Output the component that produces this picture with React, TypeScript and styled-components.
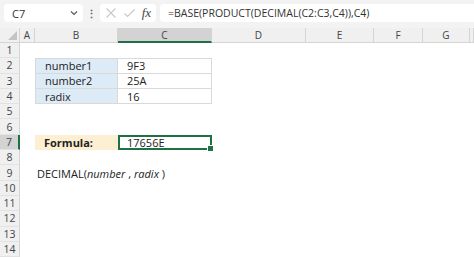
import React from "react";
import styled, { createGlobalStyle, css } from "styled-components";

const GlobalStyle = createGlobalStyle`
  html, body {
    margin: 0;
    padding: 0;
    background: #ffffff;
    overflow: hidden;
  }
  body {
    font-family: "Open Sans", "Liberation Sans", Arial, sans-serif;
    color: #222;
  }
`;

const COLS = ["A", "B", "C", "D", "E", "F", "G", ""];
const COL_WIDTHS = "20px 15px 83px 94px 94px 68px 49px 47px 1fr";
const ROW_H = 15.3;

const Page = styled.div`
  width: 474px;
  height: 257px;
  overflow: hidden;
  background: #fff;
`;

const FormulaBar = styled.div`
  display: flex;
  align-items: center;
  height: 28px;
  padding: 0 0 2px 4px;
  box-sizing: border-box;
  background: #f3f3f3;
`;

const NameBox = styled.div`
  display: flex;
  align-items: center;
  justify-content: space-between;
  width: 79px;
  height: 18px;
  box-sizing: border-box;
  padding: 0 4px 0 8px;
  background: #fff;
  border-radius: 4px;
  font-size: 11px;
  color: #333;
`;

const Dots = styled.div`
  width: 17px;
  text-align: center;
  color: #666;
  font-size: 11px;
  font-weight: bold;
`;

const ButtonBox = styled.div`
  display: flex;
  align-items: center;
  justify-content: space-around;
  width: 56px;
  height: 18px;
  background: #fff;
  border-radius: 4px;
  padding: 0 2px;
  box-sizing: border-box;
`;

const Fx = styled.span`
  font-family: "Liberation Serif", "Times New Roman", serif;
  font-style: italic;
  font-size: 13px;
  color: #444;
`;

const FormulaInput = styled.div`
  flex: 1;
  height: 18px;
  margin-left: 4px;
  background: #fff;
  border-radius: 4px 0 0 4px;
  display: flex;
  align-items: center;
  padding-left: 8px;
  font-size: 10.5px;
  color: #333;
  white-space: nowrap;
`;

const Sheet = styled.div`
  display: grid;
  grid-template-columns: ${COL_WIDTHS};
  grid-template-rows: 15px repeat(14, ${ROW_H}px);
`;

const Corner = styled.div`
  background: #f0f0f0;
  border-right: 1px solid #d4d4d4;
  border-bottom: 1px solid #d4d4d4;
  position: relative;
  &::after {
    content: "";
    position: absolute;
    right: 2px;
    bottom: 2px;
    width: 0;
    height: 0;
    border-left: 9px solid transparent;
    border-bottom: 9px solid #c4c4c4;
  }
`;

const ColHead = styled.div<{ $active?: boolean }>`
  display: flex;
  align-items: center;
  justify-content: center;
  font-size: 10px;
  color: #444;
  background: ${(p) => (p.$active ? "#d3d3d3" : "#f0f0f0")};
  border-right: 1px solid #d4d4d4;
  border-bottom: ${(p) => (p.$active ? "2px solid #1e7145" : "1px solid #d4d4d4")};
  box-sizing: border-box;
`;

const RowHead = styled.div<{ $active?: boolean }>`
  display: flex;
  align-items: center;
  justify-content: center;
  font-size: 10.5px;
  color: #444;
  background: ${(p) => (p.$active ? "#d3d3d3" : "#f0f0f0")};
  border-right: ${(p) => (p.$active ? "2px solid #1e7145" : "1px solid #d4d4d4")};
  border-bottom: 1px solid #e2e2e2;
  box-sizing: border-box;
`;

type CellKind = "plain" | "label" | "value" | "formulaLabel" | "selected";

const Cell = styled.div<{ $kind?: CellKind; $span?: number; $top?: boolean; $indent?: number }>`
  display: flex;
  align-items: center;
  padding-left: ${(p) => p.$indent ?? 9}px;
  font-size: 11px;
  color: #222;
  white-space: nowrap;
  box-sizing: border-box;
  position: relative;
  ${(p) => (p.$span ? `grid-column: span ${p.$span};` : "")}
  ${(p) => p.$top && "border-top: 1px solid #d9d9d9;"}
  ${(p) =>
    p.$kind === "label" &&
    css`
      background: #ddebf7;
      border-left: 1px solid #d9d9d9;
      border-right: 1px solid #d9d9d9;
      border-bottom: 1px solid #d9d9d9;
    `}
  ${(p) =>
    p.$kind === "value" &&
    css`
      background: #fff;
      border-right: 1px solid #d9d9d9;
      border-bottom: 1px solid #d9d9d9;
    `}
  ${(p) =>
    p.$kind === "formulaLabel" &&
    css`
      background: #fdefd2;
      font-weight: bold;
    `}
  ${(p) =>
    p.$kind === "selected" &&
    css`
      border: 2px solid #1e7145;
      padding-left: 7px;
      &::after {
        content: "";
        position: absolute;
        right: -4px;
        bottom: -4px;
        width: 5px;
        height: 5px;
        background: #1e7145;
        border: 1px solid #fff;
      }
    `}
`;

const Italic = styled.i`
  font-style: italic;
`;

const TABLE = [
  ["number1", "9F3"],
  ["number2", "25A"],
  ["radix", "16"],
];

const renderRow = (n: number) => {
  const items: React.ReactNode[] = [
    <RowHead key={`h${n}`} $active={n === 7}>
      {n}
    </RowHead>,
  ];
  if (n >= 2 && n <= 4) {
    const [label, value] = TABLE[n - 2];
    items.push(<Cell key={`a${n}`} />);
    items.push(
      <Cell key={`b${n}`} $kind="label" $top={n === 2}>
        {label}
      </Cell>
    );
    items.push(
      <Cell key={`c${n}`} $kind="value" $top={n === 2}>
        {value}
      </Cell>
    );
    items.push(<Cell key={`r${n}`} $span={5} />);
  } else if (n === 7) {
    items.push(<Cell key="a7" />);
    items.push(
      <Cell key="b7" $kind="formulaLabel">
        Formula:
      </Cell>
    );
    items.push(
      <Cell key="c7" $kind="selected">
        17656E
      </Cell>
    );
    items.push(<Cell key="r7" $span={5} />);
  } else if (n === 9) {
    items.push(<Cell key="a9" />);
    items.push(
      <Cell key="b9" $span={7} $indent={2}>
        DECIMAL(<Italic>number</Italic>&nbsp;,&nbsp;<Italic>radix</Italic>&nbsp;)
      </Cell>
    );
  } else {
    items.push(<Cell key={`r${n}`} $span={8} />);
  }
  return items;
};

const App: React.FC = () => {
  return (
    <Page>
      <GlobalStyle />
      <FormulaBar>
        <NameBox>
          <span>C7</span>
          <svg width="10" height="10" viewBox="0 0 10 10">
            <path d="M2 3.5 L5 6.5 L8 3.5" fill="none" stroke="#555" strokeWidth="1.1" />
          </svg>
        </NameBox>
        <Dots>⋮</Dots>
        <ButtonBox>
          <svg width="12" height="12" viewBox="0 0 12 12">
            <path d="M1.5 1.5 L10.5 10.5 M10.5 1.5 L1.5 10.5" stroke="#c8c8c8" strokeWidth="1.1" />
          </svg>
          <svg width="13" height="12" viewBox="0 0 13 12">
            <path d="M1.5 6.5 L4.5 9.5 L11.5 2.5" fill="none" stroke="#c8c8c8" strokeWidth="1.1" />
          </svg>
          <Fx>fx</Fx>
        </ButtonBox>
        <FormulaInput>=BASE(PRODUCT(DECIMAL(C2:C3,C4)),C4)</FormulaInput>
      </FormulaBar>
      <Sheet>
        <Corner />
        {COLS.map((c, i) => (
          <ColHead key={`col${i}`} $active={c === "C"}>
            {c}
          </ColHead>
        ))}
        {Array.from({ length: 14 }, (_, i) => renderRow(i + 1))}
      </Sheet>
    </Page>
  );
};

export default App;
